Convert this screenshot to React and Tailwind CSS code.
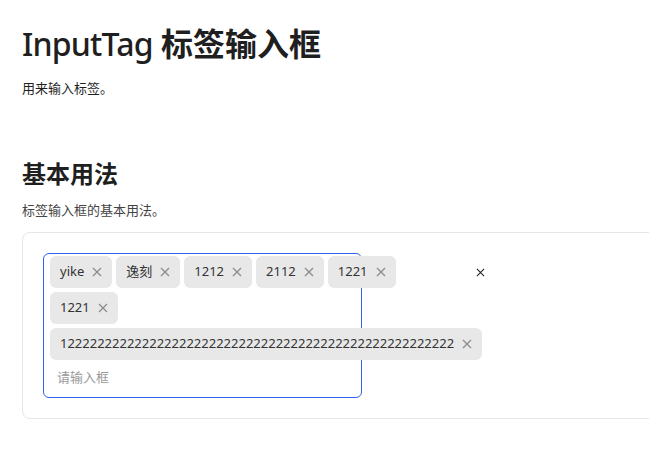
const TAGS = ['yike', '逸刻', '1212', '2112', '1221', '1221', '1' + '2'.repeat(52)]

const font = { fontFamily: '"Noto Sans", "Noto Sans CJK SC", sans-serif' }

function Close({ className }) {
  return (
    <svg viewBox="0 0 10 10" className={className} fill="none" stroke="currentColor" strokeWidth="1.2">
      <path d="M1 1l8 8M9 1l-8 8" />
    </svg>
  )
}

export default function App() {
  return (
    <div className="min-h-screen overflow-hidden bg-white text-[#1f1f1f]" style={font}>
      <div className="px-[22px]">
        <h1 className="mt-[25px] text-[32px] leading-[38px] font-bold">
          <span className="font-medium tracking-tight">InputTag</span> 标签输入框
        </h1>
        <p className="mt-[15px] text-[13px] leading-[20px]">用来输入标签。</p>

        <h2 className="mt-[60px] text-[24px] leading-[32px] font-bold">基本用法</h2>
        <p className="mt-[10px] text-[13px] leading-[20px] text-[#444]">标签输入框的基本用法。</p>

        {/* demo card */}
        <div className="mt-[12px] w-[720px] rounded-lg border border-[#e5e5e5] p-[20px]">
          <div className="relative w-[319px] rounded-md border border-[#2f62f0] pt-[2px] px-[6px] pb-[3px]">
            <div className="flex w-[400px] flex-wrap gap-1">
              {TAGS.map((t, i) => (
                <span
                  key={i}
                  className="flex h-[32px] items-center whitespace-nowrap rounded-md bg-[#e8e8e8] pl-[10px] pr-[10px] text-[13px] text-[#333]"
                >
                  {t}
                  <Close className="ml-[8px] h-[10px] w-[10px] text-[#8a8a8a]" />
                </span>
              ))}
            </div>
            <div className="mt-[2px] flex h-[32px] items-center pl-[7px] text-[13px] text-[#999]">请输入框</div>
            <Close className="absolute left-[432px] top-[14px] h-[9px] w-[9px] text-[#222]" />
          </div>
        </div>
      </div>
    </div>
  )
}
